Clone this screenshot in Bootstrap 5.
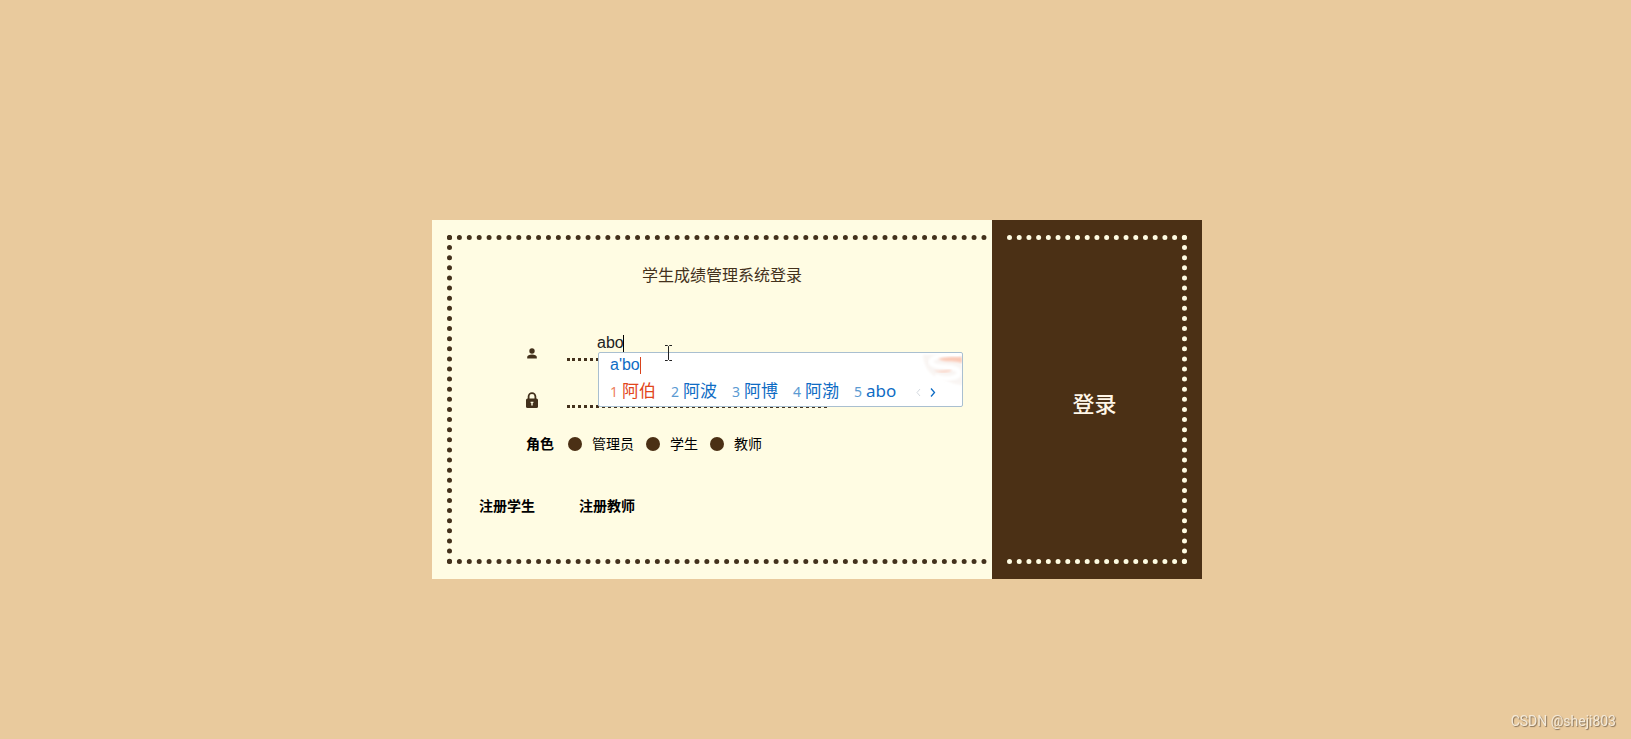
<!DOCTYPE html>
<html lang="zh-CN">
<head>
<meta charset="utf-8">
<meta name="viewport" content="width=device-width, initial-scale=1">
<title>学生成绩管理系统登录</title>
<link href="https://cdn.jsdelivr.net/npm/bootstrap@5.3.0/dist/css/bootstrap.min.css" rel="stylesheet">
<style>
  :root { --sand: #e9ca9d; --cream: #fffce3; --brown: #4b3015; --ink: #43311c; }
  body { background: var(--sand); font-family: "Liberation Sans", "Noto Sans CJK SC", sans-serif; color: #000; }
  .login-page { padding: 60px 0 0 3px; }
  .login-box { max-width: 770px; }
  .login-form { background: var(--cream); padding: 15px 5px 15px 15px; }
  .login-side { background: var(--brown); width: 210px; padding: 15px; }
  .dotted-frame { border: 5px dotted var(--ink); border-right: 0; }
  .login-side .dotted-frame { border: 5px dotted var(--cream); border-left: 0; }
  .form-title { font-size: 16px; line-height: 24px; color: var(--ink); margin: 24px 0 40px; padding-left: 5px; }
  .field-list { padding-left: 74px; font-size: 14px; line-height: 24px; }
  .field-row { margin-bottom: 14px; }
  .field-name { width: 41px; line-height: 0; }
  .dotted-input { width: 260px; height: 33px; padding: 0 0 0 30px; border: 0; border-bottom: 3px dotted var(--ink); background: transparent; font-size: 16px; color: #222; outline: 0; }
  .caret { left: 56px; top: 7px; width: 1px; height: 17px; background: #000; }
  .pointer { left: 97px; top: 16px; z-index: 4; }
  .role-row { padding-top: 10px; }
  .role-name { width: 42px; }
  .role-row input { appearance: none; width: 14px; height: 14px; margin: 0 10px 0 0; border-radius: 50%; background: var(--brown); }
  .register-row { padding: 38px 0 41px 27px; gap: 44px; font-size: 14px; line-height: 24px; font-weight: 700; }
  .register-row a { color: #000; }
  .login-btn { font-size: 22px; line-height: 32px; font-weight: 500; color: #fff6e8; background: transparent; border: 0; padding: 10px 0 0; }
  .ime { left: 31px; top: 24px; width: 365px; height: 55px; z-index: 3; background: #fff; border: 1px solid #a9bfd0; border-radius: 2px; padding: 0 11px; color: #0f6cc4; font-family: "Noto Sans", "Noto Sans CJK SC", sans-serif; }
  .ime-typed { font: 16px/23px "Liberation Sans", sans-serif; }
  .ime-typed span { display: inline-block; width: 1px; height: 17px; background: #d9431c; vertical-align: middle; }
  .ime-words { list-style: none; gap: 15px; font-size: 17px; line-height: 29px; white-space: nowrap; }
  .ime-words small { display: inline-block; width: 12px; font-size: 14px; color: #5b9ad2; }
  .ime-words .picked, .ime-words .picked small { color: #e2461c; }
  .ime-words .picked small { color: #ee7f60; }
  .ime-logo { right: 0; top: 0; }
  .watermark { right: 15px; bottom: 8px; font-family: Roboto, sans-serif; font-size: 14px; line-height: 20px; color: #f4ead9; text-shadow: 1px 1px 1px #85715a; }
</style>
</head>
<body class="min-vh-100 d-flex flex-column">
<main class="login-page flex-grow-1 d-flex align-items-center justify-content-center">
  <form class="login-box w-100 d-flex" onsubmit="return false">
    <section class="login-form flex-grow-1">
      <div class="dotted-frame h-100">
        <h1 class="form-title fw-normal text-center">学生成绩管理系统登录</h1>
        <div class="field-list">
          <div class="field-row d-flex align-items-end">
            <label class="field-name" for="account" aria-label="账号">
              <svg width="12" height="16" viewBox="0 0 12 16" fill="#43311c"><circle cx="6" cy="6" r="2.700"/><path d="M1.200 13.500v-1.500C1.200 10.200 3.400 9.400 6 9.400s4.800.8 4.800 2.600v1.500z"/></svg>
            </label>
            <div class="position-relative">
              <input class="dotted-input d-block" id="account" type="text" value="abo" autocomplete="off" spellcheck="false">
              <span class="caret position-absolute"></span>
              <svg class="pointer position-absolute" width="9" height="18" viewBox="0 0 9 18" fill="none" stroke="#222"><path d="M1 1.500h2.500l1 1 1-1H8M4.500 2.500v13M1 16.500h2.500l1-1 1 1H8"/></svg>
              <div class="ime position-absolute">
                <div class="ime-typed">a'bo<span></span></div>
                <ol class="ime-words d-flex p-0 m-0">
                  <li class="picked"><small>1</small>阿伯</li>
                  <li><small>2</small>阿波</li>
                  <li><small>3</small>阿博</li>
                  <li><small>4</small>阿渤</li>
                  <li><small>5</small>abo</li>
                  <li><svg width="28" height="12" viewBox="0 0 28 12" fill="none"><path stroke="#d5dae0" d="M9 3 6 6.500 9 10"/><path stroke="#0f6cc4" stroke-width="1.300" d="M20 2.500l3.500 4-3.500 4"/></svg></li>
                </ol>
                <svg class="ime-logo position-absolute" width="42" height="34" viewBox="0 0 42 34" fill="none">
                  <defs><filter id="soft"><feGaussianBlur stdDeviation="1.200"/></filter></defs>
                  <path filter="url(#soft)" fill="#f9f5f3" d="M3 2h39v30c-10-1-13-4-22-7C10 23 4 14 3 2z"/>
                  <path filter="url(#soft)" stroke="#fff" stroke-width="5" d="M40 2C20 0 7 6 12 11s26 1 27 8-15 8-24 4"/>
                  <path filter="url(#soft)" fill="#fbc9b6" d="M18 6c7-2 13-2 24-2v6c-8-3-14 0-24-4z"/>
                  <path filter="url(#soft)" fill="#fbd5c7" d="M14 17c6 2 11-1 18 0-2 3-14 4-18 0z"/>
                </svg>
              </div>
            </div>
          </div>
          <div class="field-row d-flex align-items-end">
            <label class="field-name" for="password" aria-label="密码">
              <svg width="12" height="16" viewBox="0 0 12 16" fill="#43311c"><path fill="none" stroke="#43311c" stroke-width="1.800" d="M2.600 8V4.600a3.400 3.400 0 0 1 6.800 0V8"/><rect y="6.500" width="12" height="9.500" rx="1.500"/><path fill="#fffce3" d="M4.600 9.700h2.800v1.400h-.7V13.500H5.300V11.100h-.7z"/></svg>
            </label>
            <input class="dotted-input d-block" id="password" type="password" autocomplete="off">
          </div>
          <div class="role-row d-flex align-items-center">
            <span class="role-name fw-bold">角色</span>
            <div class="d-flex" role="radiogroup" aria-label="角色">
              <label class="d-flex align-items-center me-2 pe-1"><input type="radio" name="role">管理员</label>
              <label class="d-flex align-items-center me-2 pe-1"><input type="radio" name="role">学生</label>
              <label class="d-flex align-items-center"><input type="radio" name="role">教师</label>
            </div>
          </div>
        </div>
        <nav class="register-row d-flex">
          <a class="text-decoration-none" href="#">注册学生</a>
          <a class="text-decoration-none" href="#">注册教师</a>
        </nav>
      </div>
    </section>
    <section class="login-side flex-shrink-0 d-flex">
      <div class="dotted-frame w-100 d-flex">
        <button class="login-btn w-100" type="submit">登录</button>
      </div>
    </section>
  </form>
</main>
<span class="watermark position-fixed">CSDN @sheji803</span>
<script src="https://cdn.jsdelivr.net/npm/bootstrap@5.3.0/dist/js/bootstrap.bundle.min.js"></script>
</body>
</html>
